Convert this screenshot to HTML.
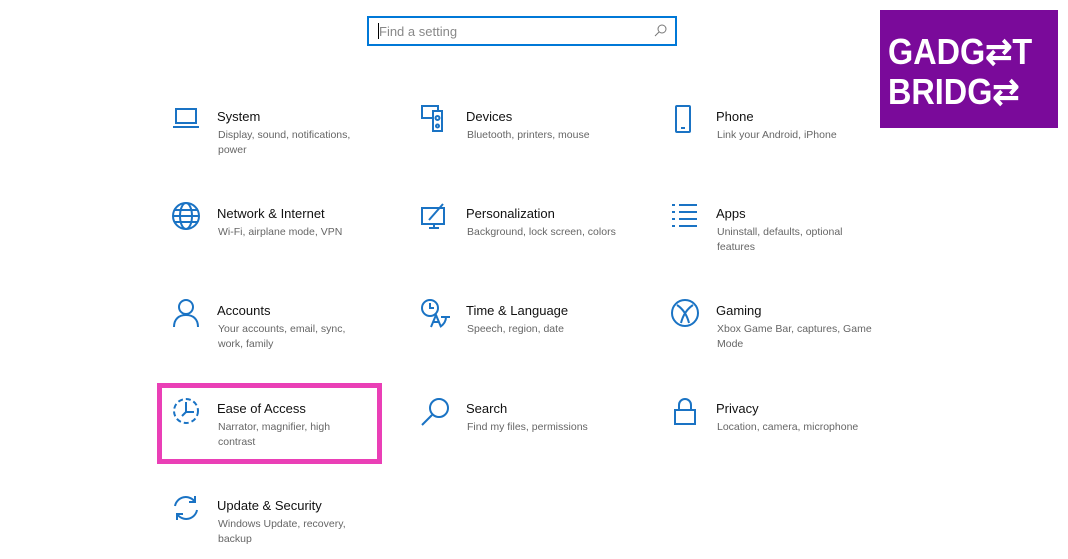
<!DOCTYPE html>
<html><head><style>
body{margin:0;width:1068px;height:559px;background:#fff;font-family:"Liberation Sans",sans-serif;position:relative;overflow:hidden}
.sb{position:absolute;left:367px;top:16px;width:306px;height:26px;border:2px solid #0078d7;}
.sb span{position:absolute;left:10px;top:6px;font-size:13px;color:#888}
.sb .cur{position:absolute;left:9px;top:5px;width:1px;height:16px;background:#000}
.logo{position:absolute;left:880px;top:10px;width:178px;height:118px;background:#7a0a9a;overflow:hidden}
.logo div{position:absolute;left:8px;color:#fff;font-weight:bold;font-size:36px;line-height:40px;transform:scaleX(0.9);transform-origin:left}
.it{position:absolute;width:200px}
.it .t{position:absolute;left:45px;top:0;font-size:13px;color:#111;white-space:nowrap}
.it .s{position:absolute;left:46px;top:19px;font-size:10.5px;color:#666;line-height:15px;width:160px}
.c1 .s{width:140px}
.it svg{position:absolute;left:0;top:-4px}
.pink{position:absolute;left:157px;top:383px;width:215px;height:71px;border:5px solid #ea3fb6}
</style></head><body>
<div class="sb"><div class="cur"></div><span>Find a setting</span>
<svg style="position:absolute;right:8px;top:6px" width="13" height="13" viewBox="0 0 13 13"><circle cx="8" cy="5" r="4" fill="none" stroke="#777"/><path d="M5 8L1 12" stroke="#777"/></svg></div>
<div class="logo"><div style="top:22px">GADG&#8644;T</div><div style="top:62px">BRIDG&#8644;</div></div>

<div class="it c1" style="left:172px;top:109px"><svg width="28" height="28" viewBox="0 0 28 28" fill="none" stroke="#1a73c4" stroke-width="2"><rect x="4" y="4" width="20" height="14"/><path d="M1 22h26"/></svg><div class="t">System</div><div class="s">Display, sound, notifications, power</div></div>
<div class="it" style="left:421px;top:109px"><svg width="28" height="30" viewBox="0 0 28 30" fill="none" stroke="#1a73c4" stroke-width="2"><rect x="1" y="1" width="16" height="12"/><rect x="12" y="6" width="9" height="20" fill="#fff"/><circle cx="16.5" cy="13" r="2"/><circle cx="16.5" cy="21" r="1.5"/></svg><div class="t">Devices</div><div class="s">Bluetooth, printers, mouse</div></div>
<div class="it" style="left:671px;top:109px"><svg width="28" height="30" viewBox="0 0 28 30" fill="none" stroke="#1a73c4" stroke-width="2"><rect x="5" y="1" width="14" height="26" rx="1"/><path d="M10 23h4"/></svg><div class="t">Phone</div><div class="s">Link your Android, iPhone</div></div>

<div class="it c1" style="left:172px;top:206px"><svg width="28" height="30" viewBox="0 0 28 30" fill="none" stroke="#1a73c4" stroke-width="2"><circle cx="14" cy="14" r="13"/><ellipse cx="14" cy="14" rx="6" ry="13"/><path d="M1 14h26M3 8h22M3 20h22"/></svg><div class="t">Network &amp; Internet</div><div class="s">Wi-Fi, airplane mode, VPN</div></div>
<div class="it" style="left:421px;top:206px"><svg width="28" height="30" viewBox="0 0 28 30" fill="none" stroke="#1a73c4" stroke-width="2"><rect x="1" y="6" width="22" height="16"/><path d="M8 26h10M13 22v4M8 18l14-16"/></svg><div class="t">Personalization</div><div class="s" style="width:180px">Background, lock screen, colors</div></div>
<div class="it" style="left:671px;top:206px"><svg width="28" height="30" viewBox="0 0 28 30" fill="none" stroke="#1a73c4" stroke-width="2"><path d="M1 3h3M8 3h18M1 10h3M8 10h18M1 17h3M8 17h18M1 24h3M8 24h18"/></svg><div class="t">Apps</div><div class="s">Uninstall, defaults, optional features</div></div>

<div class="it c1" style="left:172px;top:303px"><svg width="28" height="30" viewBox="0 0 28 30" fill="none" stroke="#1a73c4" stroke-width="2"><circle cx="14" cy="8" r="7"/><path d="M2 28c0-8 5-12 12-12s12 4 12 12"/></svg><div class="t">Accounts</div><div class="s">Your accounts, email, sync, work, family</div></div>
<div class="it" style="left:421px;top:303px"><svg width="30" height="30" viewBox="0 0 30 30" fill="none" stroke="#1a73c4" stroke-width="2"><circle cx="9" cy="9" r="8"/><path d="M9 4v5h4M10 28l5-12 5 12M12 23h6M20 18h9M25 18c0 5-3 8-6 10"/></svg><div class="t">Time &amp; Language</div><div class="s">Speech, region, date</div></div>
<div class="it" style="left:671px;top:303px"><svg width="28" height="30" viewBox="0 0 28 30" fill="none" stroke="#1a73c4" stroke-width="2"><circle cx="14" cy="14" r="13"/><path d="M6 6c6 4 10 10 12 18M22 6c-6 4-10 10-12 18"/></svg><div class="t">Gaming</div><div class="s">Xbox Game Bar, captures, Game Mode</div></div>

<div class="it c1" style="left:172px;top:401px"><svg width="28" height="30" viewBox="0 0 28 30" fill="none" stroke="#1a73c4" stroke-width="2"><circle cx="14" cy="14" r="12" stroke-dasharray="5 3"/><path d="M14 5v10h8M10 19l4 -4"/></svg><div class="t">Ease of Access</div><div class="s">Narrator, magnifier, high contrast</div></div>
<div class="it" style="left:421px;top:401px"><svg width="30" height="30" viewBox="0 0 30 30" fill="none" stroke="#1a73c4" stroke-width="2"><circle cx="18" cy="11" r="9"/><path d="M11 18L1 28"/></svg><div class="t">Search</div><div class="s">Find my files, permissions</div></div>
<div class="it" style="left:671px;top:401px"><svg width="28" height="30" viewBox="0 0 28 30" fill="none" stroke="#1a73c4" stroke-width="2"><rect x="4" y="13" width="20" height="14"/><path d="M8 13V8a6 6 0 0112 0v5"/></svg><div class="t">Privacy</div><div class="s">Location, camera, microphone</div></div>

<div class="it c1" style="left:172px;top:498px"><svg width="28" height="30" viewBox="0 0 28 30" fill="none" stroke="#1a73c4" stroke-width="2"><path d="M3 12a11 11 0 0120-4M25 16a11 11 0 01-20 4M23 2v6h-6M5 26v-6h6"/></svg><div class="t">Update &amp; Security</div><div class="s">Windows Update, recovery, backup</div></div>

<div class="pink"></div>
</body></html>
